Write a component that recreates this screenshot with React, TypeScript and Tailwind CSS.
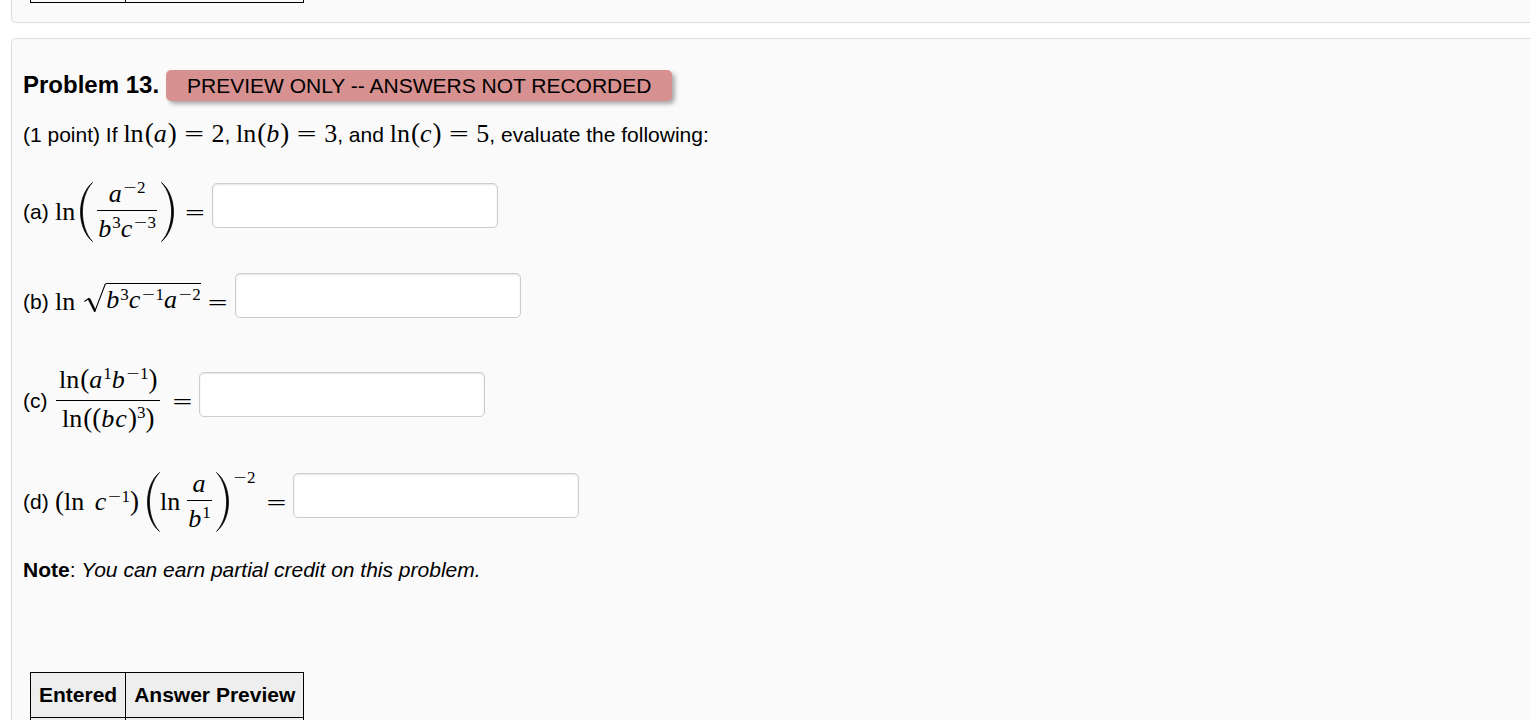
import React from 'react';

type Children = { children: React.ReactNode };

const Fn: React.FC<Children> = ({ children }) => <span className="pr-px">{children}</span>;

const Var: React.FC<Children> = ({ children }) => <i className="pr-px">{children}</i>;

const Op: React.FC<Children> = ({ children }) => (
  <span className="font-['DejaVu_Sans_Light','DejaVu_Sans',sans-serif] font-extralight leading-none">{children}</span>
);

const Paren: React.FC<Children> = ({ children }) => <span className="text-[27px] leading-none">{children}</span>;

const Sup: React.FC<{ neg?: boolean; children: React.ReactNode }> = ({ neg, children }) => (
  <sup className="text-[17px]">
    {neg && <Op>−</Op>}
    {children}
  </sup>
);

const MathText: React.FC<Children> = ({ children }) => (
  <span className="font-['Liberation_Serif',serif] text-[26px] leading-[28px] whitespace-nowrap">{children}</span>
);

const Frac: React.FC<{ tall?: boolean; top: React.ReactNode; bottom: React.ReactNode }> = ({ tall, top, bottom }) => (
  <span className={`inline-flex flex-col items-stretch text-center ${tall ? 'mx-px mb-0.5' : 'mx-1'}`}>
    <span className={`border-b border-black ${tall ? 'px-[3px] pb-1' : 'px-px'}`}>
      <MathText>{top}</MathText>
    </span>
    <span className="px-px pt-1">
      <MathText>{bottom}</MathText>
    </span>
  </span>
);

// Tall delimiter that spans a fraction
const Delimiter: React.FC<{ side: 'left' | 'right' }> = ({ side }) => (
  <svg
    aria-hidden="true"
    viewBox="0 0 13 60"
    className={side === 'left' ? 'h-[60px] w-[13px] shrink-0' : 'h-[60px] w-[13px] shrink-0 -scale-x-100'}
  >
    <path d="M12.5 0.5C-3.5 14 -3.5 46 12.5 59.5C-0.9 45 -0.9 15 12.5 0.5Z" fill="black" stroke="black" strokeWidth="0.7" />
  </svg>
);

const Root: React.FC<Children> = ({ children }) => (
  <span className="inline-flex items-start">
    <svg aria-hidden="true" viewBox="0 0 22 30" className="h-[30px] w-[22px] shrink-0">
      <path d="M0.5 18.5L4.5 15.5L11 28L21.5 0.5" fill="none" stroke="black" strokeWidth="1.1" />
      <path d="M4 16L10.5 29L11.5 27L6 15.5Z" fill="black" stroke="black" strokeWidth="0.6" />
    </svg>
    <span className="border-t border-black pt-0.5">
      <MathText>{children}</MathText>
    </span>
  </span>
);

const Part: React.FC<{ id: string; className: string; children: React.ReactNode }> = ({ id, className, children }) => (
  <div className={`flex items-center ${className}`}>
    <label htmlFor={`answer-${id}`} className="w-8 shrink-0">
      ({id})
    </label>
    <div className="flex items-center">{children}</div>
    <span className="ml-2.5 text-[26px]">
      <Op>=</Op>
    </span>
    <input
      id={`answer-${id}`}
      type="text"
      className="mb-3.5 ml-1.5 h-[45px] w-[286px] rounded-[5px] border border-[#ccc] bg-white px-2 shadow-[inset_0_1px_2px_rgba(0,0,0,0.1)] outline-none"
    />
  </div>
);

const App: React.FC = () => {
  return (
    <div className="h-screen overflow-hidden bg-white pl-[11px] font-['Liberation_Sans',Arial,sans-serif] text-[21px] leading-[30px] text-black">
      {/* End of the previous problem */}
      <section className="mb-[15px] h-[23px] rounded-bl-[5px] border-b border-l border-[#ddd] bg-[#fafafa] pl-[18px]">
        <table className="border-collapse">
          <tbody>
            <tr>
              <td className="h-0.5 w-[95px] border border-t-0 border-black p-0" />
              <td className="h-0.5 w-[178px] border border-t-0 border-black p-0" />
            </tr>
          </tbody>
        </table>
      </section>

      <section className="rounded-tl-[5px] border-t border-l border-[#ddd] bg-[#fafafa] pt-[31px] pl-[11px]">
        <div className="flex items-center gap-[7px]">
          <h2 className="pb-0.5 text-[24px] leading-[29px] font-bold">Problem 13.</h2>
          <span className="rounded-[5px] bg-[#d69190] px-[21px] leading-[31px] shadow-[3px_3px_4px_#aaa]">
            PREVIEW ONLY -- ANSWERS NOT RECORDED
          </span>
        </div>

        <p className="mt-[19px] whitespace-nowrap">
          (1 point) If{' '}
          <MathText>
            <Fn>ln</Fn><Paren>(</Paren><Var>a</Var><Paren>)</Paren> <Op>=</Op> 2
          </MathText>
          ,{' '}
          <MathText>
            <Fn>ln</Fn><Paren>(</Paren><Var>b</Var><Paren>)</Paren> <Op>=</Op> 3
          </MathText>
          , and{' '}
          <MathText>
            <Fn>ln</Fn><Paren>(</Paren><Var>c</Var><Paren>)</Paren> <Op>=</Op> 5
          </MathText>
          , evaluate the following:
        </p>

        <div className="mt-8 flex flex-col gap-[30px]">
          <Part id="a" className="h-[60px]">
            <MathText><Fn>ln</Fn></MathText>
            <span className="ml-1 flex items-center">
              <Delimiter side="left" />
              <Frac
                top={<><Var>a</Var><Sup neg>2</Sup></>}
                bottom={<><Var>b</Var><Sup>3</Sup><Var>c</Var><Sup neg>3</Sup></>}
              />
              <Delimiter side="right" />
            </span>
          </Part>

          <Part id="b" className="h-[60px]">
            <MathText><Fn>ln</Fn></MathText>
            <span className="-mr-1 ml-2">
              <Root>
                <Var>b</Var><Sup>3</Sup><Var>c</Var><Sup neg>1</Sup><Var>a</Var><Sup neg>2</Sup>
              </Root>
            </span>
          </Part>

          <Part id="c" className="h-[78px]">
            <Frac
              tall
              top={
                <>
                  <Fn>ln</Fn><Paren>(</Paren><Var>a</Var><Sup>1</Sup><Var>b</Var><Sup neg>1</Sup><Paren>)</Paren>
                </>
              }
              bottom={
                <>
                  <Fn>ln</Fn><Paren>((</Paren><Var>b</Var><Var>c</Var><Paren>)</Paren><Sup>3</Sup><Paren>)</Paren>
                </>
              }
            />
          </Part>

          <Part id="d" className="h-16">
            <MathText>
              <Paren>(</Paren><span className="mr-1">ln</span> <Var>c</Var><Sup neg>1</Sup><Paren>)</Paren>
            </MathText>
            <span className="ml-2 flex items-center">
              <Delimiter side="left" />
              <MathText><Fn>ln</Fn></MathText>
              <span className="ml-0.5 flex">
                <Frac top={<Var>a</Var>} bottom={<><Var>b</Var><Sup>1</Sup></>} />
              </span>
              <Delimiter side="right" />
            </span>
            <span className="ml-1 self-start">
              <MathText><Sup neg>2</Sup></MathText>
            </span>
          </Part>
        </div>

        <p className="mt-[21px]">
          <b>Note</b>: <em>You can earn partial credit on this problem.</em>
        </p>

        <table className="mt-[87px] ml-[7px] border-collapse">
          <thead>
            <tr className="h-[45px] bg-[#eee]">
              <th className="border border-black px-2 py-0">Entered</th>
              <th className="border border-black px-2 py-0">Answer Preview</th>
            </tr>
          </thead>
          <tbody>
            <tr className="h-[45px] bg-[#eee]">
              <td className="border border-black" />
              <td className="border border-black" />
            </tr>
          </tbody>
        </table>
      </section>
    </div>
  );
};

export default App;
